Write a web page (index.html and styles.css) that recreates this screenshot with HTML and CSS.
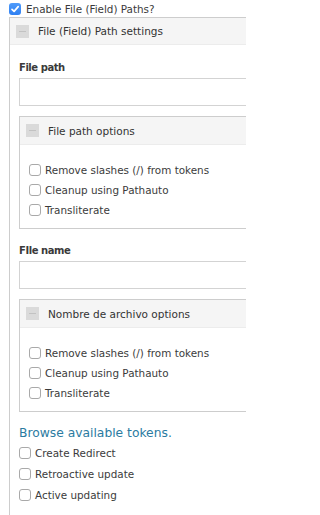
FILE: index.html
```html
<!DOCTYPE html>
<html>
<head>
<meta charset="utf-8">
<link rel="stylesheet" href="styles.css">
</head>
<body>
<div class="page">
  <div class="toprow">
    <span class="cb checked"><svg viewBox="0 0 12 12" width="12" height="12"><path d="M3 6.3 L5.1 8.4 L9.2 3.6" fill="none" stroke="#fff" stroke-width="1.7" stroke-linecap="round" stroke-linejoin="round"/></svg></span>
    <span class="toptext">Enable File (Field) Paths?</span>
  </div>
  <div class="fieldset outer">
    <div class="legend outer-legend">
      <span class="minus"></span>
      <span class="legend-text">File (Field) Path settings</span>
    </div>
    <div class="outer-body">
      <div class="label">File path</div>
      <div class="input"></div>
      <div class="fieldset nested">
        <div class="legend nested-legend">
          <span class="minus"></span>
          <span class="legend-text">File path options</span>
        </div>
        <div class="nested-body">
          <div class="row"><span class="cb"></span><span>Remove slashes (/) from tokens</span></div>
          <div class="row"><span class="cb"></span><span>Cleanup using Pathauto</span></div>
          <div class="row"><span class="cb"></span><span>Transliterate</span></div>
        </div>
      </div>
      <div class="label second">FIle name</div>
      <div class="input"></div>
      <div class="fieldset nested">
        <div class="legend nested-legend">
          <span class="minus"></span>
          <span class="legend-text">Nombre de archivo options</span>
        </div>
        <div class="nested-body">
          <div class="row"><span class="cb"></span><span>Remove slashes (/) from tokens</span></div>
          <div class="row"><span class="cb"></span><span>Cleanup using Pathauto</span></div>
          <div class="row"><span class="cb"></span><span>Transliterate</span></div>
        </div>
      </div>
      <a class="link" href="#">Browse available tokens.</a>
      <div class="row wide"><span class="cb"></span><span>Create Redirect</span></div>
      <div class="row wide"><span class="cb"></span><span>Retroactive update</span></div>
      <div class="row wide"><span class="cb"></span><span>Active updating</span></div>
    </div>
  </div>
</div>
</body>
</html>
```

FILE: styles.css
```css
html, body {
  margin: 0;
  padding: 0;
  overflow: hidden;
  background: #fff;
}
body {
  font-family: "DejaVu Sans", Verdana, sans-serif;
  font-size: 10.4px;
  color: #3b3b3b;
}
.page {
  width: 246px;
  height: 515px;
  overflow: hidden;
}
.toprow {
  display: flex;
  align-items: center;
  height: 17px;
  padding-left: 9px;
  gap: 5px;
}
.cb {
  box-sizing: border-box;
  width: 12px;
  height: 12px;
  border: 1px solid #a9a9a9;
  border-radius: 3px;
  background: #fff;
  flex: none;
  display: block;
}
.cb.checked {
  border: none;
  background: linear-gradient(#4f9bfa, #2f80f2);
}
.cb svg {
  display: block;
}
.fieldset {
  box-sizing: border-box;
  border: 1px solid #cdcdcd;
  border-right: none;
  background: #fff;
}
.outer {
  margin-left: 9px;
  width: 300px;
  height: 498px;
  border-bottom: none;
}
.legend {
  display: flex;
  align-items: center;
  background: #f5f5f5;
  padding-left: 6px;
  gap: 9px;
  font-size: 10.5px;
  color: #333;
}
.outer-legend {
  height: 27px;
  box-sizing: border-box;
  border-bottom: 1px solid #ececec;
}
.nested-legend {
  height: 28px;
  box-sizing: border-box;
  border-bottom: 1px solid #ececec;
}
.minus {
  width: 13px;
  height: 13px;
  background: #dadada;
  flex: none;
  position: relative;
}
.minus::after {
  content: "";
  position: absolute;
  left: 3px;
  right: 3px;
  top: 6px;
  height: 1px;
  background: #c2c2c2;
}
.outer-body {
  padding: 16px 0 0 9px;
}
.label {
  font-weight: bold;
  font-size: 10px;
  letter-spacing: -0.45px;
  line-height: 14px;
  height: 14px;
  margin-bottom: 3px;
  color: #3a3a3a;
}
.label.second {
  margin-top: 15px;
}
.input {
  box-sizing: border-box;
  height: 28px;
  border: 1px solid #d3d3d3;
  border-right: none;
  width: 100%;
  background: #fff;
}
.nested {
  margin-top: 10px;
  width: 100%;
}
.nested-body {
  padding: 15px 0 8px 9px;
}
.row {
  display: flex;
  align-items: center;
  height: 20px;
  gap: 4px;
}
.row.wide {
  height: 21px;
}
.link {
  display: block;
  margin-top: 12px;
  font-size: 12.3px;
  line-height: 18px;
  height: 18px;
  color: #2b7ba1;
  text-decoration: none;
}
```
